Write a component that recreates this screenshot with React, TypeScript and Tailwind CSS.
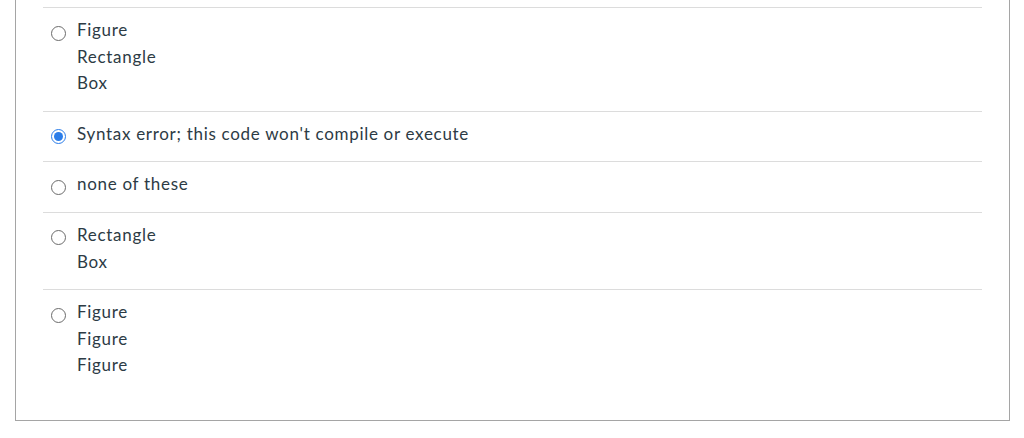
const answers: { lines: string[]; checked?: boolean }[] = [
  { lines: ["Figure", "Rectangle", "Box"] },
  { lines: ["Syntax error; this code won't compile or execute"], checked: true },
  { lines: ["none of these"] },
  { lines: ["Rectangle", "Box"] },
  { lines: ["Figure", "Figure", "Figure"] },
];

function Radio({ checked }: { checked?: boolean }) {
  if (checked) {
    return (
      <span className="grid place-items-center h-[15px] w-[15px] rounded-full border-[1.5px] border-[#2b7de9] bg-white">
        <span className="h-[9px] w-[9px] rounded-full bg-[#2b7de9]" />
      </span>
    );
  }
  return <span className="block h-[15px] w-[15px] rounded-full border border-[#6b6b6b] bg-white" />;
}

export default function App() {
  return (
    <div className="w-[1024px] h-[438px] bg-white overflow-hidden font-['Lato','Liberation_Sans',sans-serif] text-[#2d3b45]">
      <div className="ml-[15px] w-[995px] h-[421px] border-x border-b border-[#a5a5a5] pt-[7px] pl-[27px] pr-[27px]">
        {answers.map((a, i) => (
          <div key={i} className="flex gap-[11px] border-t border-[#dcdcdc] pt-[9px] pb-[14px] pl-[8px]">
            <div className="pt-[8.5px]">
              <Radio checked={a.checked} />
            </div>
            <div className="text-[17px] leading-[26.6px] tracking-[0.7px]">
              {a.lines.map((l, j) => (
                <div key={j}>{l}</div>
              ))}
            </div>
          </div>
        ))}
      </div>
    </div>
  );
}
